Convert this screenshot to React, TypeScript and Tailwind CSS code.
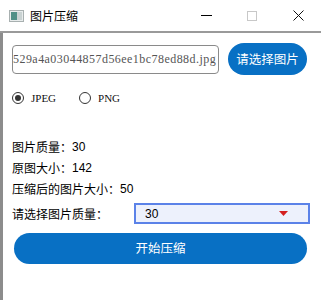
import React from 'react';

const cjk = "font-['Noto_Sans_CJK_SC',sans-serif]";

const Radio: React.FC<{ checked?: boolean; label: string }> = ({ checked, label }) => (
  <label className="flex items-center gap-[7px]">
    <span className="w-[12px] h-[12px] rounded-full border border-[#333] flex items-center justify-center bg-white">
      {checked && <span className="w-[6px] h-[6px] rounded-full bg-[#333]" />}
    </span>
    <span className="font-['Liberation_Serif',serif] text-[11px] leading-none text-[#111]">{label}</span>
  </label>
);

const InfoLine: React.FC<{ label: string; value: string }> = ({ label, value }) => (
  <div className="h-[21px] flex items-center">
    <span className={`${cjk} text-[12px] text-black`}>{label}</span>
    <span className="font-['Liberation_Sans',sans-serif] text-[12px] text-black">{value}</span>
  </div>
);

export default function App() {
  return (
    <div className="w-[321px] h-[300px] bg-white flex flex-col overflow-hidden">
      {/* title bar */}
      <div className="h-[31px] flex items-center shrink-0">
        <svg className="ml-[9px]" width="15" height="12" viewBox="0 0 15 12">
          <rect x="0.5" y="0.5" width="14" height="11" fill="#e8ecec" stroke="#a8b0b0" />
          <rect x="2" y="2" width="6" height="8" fill="#4f8f86" />
          <rect x="8" y="2" width="5" height="8" fill="#c9d2d2" />
        </svg>
        <span className={`${cjk} ml-[6px] text-[12px] text-black`}>图片压缩</span>
        <div className="ml-auto flex items-center h-full">
          <div className="w-[46px] flex justify-center">
            <div className="w-[11px] h-px bg-black" />
          </div>
          <div className="w-[46px] flex justify-center">
            <div className="w-[10px] h-[10px] border border-[#c8c8c8]" />
          </div>
          <div className="w-[46px] flex justify-center">
            <svg width="11" height="11" viewBox="0 0 11 11">
              <path d="M0.5 0.5 L10.5 10.5 M10.5 0.5 L0.5 10.5" stroke="#111" strokeWidth="1" />
            </svg>
          </div>
        </div>
      </div>
      <div className="h-[2px] bg-[#9a9a9a] shrink-0" />

      <div className="flex flex-1">
        <div className="w-[3px] bg-[#8c8c8c]" />
        <div className="flex-1 pl-[9px] pt-[10px] flex flex-col">
          <div className="flex items-center gap-[9px]">
            <div className="w-[207px] h-[29px] border border-[#8a8a8a] rounded-[4px] flex items-center overflow-hidden">
              <span className="font-['Liberation_Serif',serif] text-[12px] text-[#555] whitespace-nowrap tracking-[0.45px]">
                529a4a03044857d56ee1bc78ed88d.jpg
              </span>
            </div>
            <button className={`${cjk} w-[79px] h-[32px] rounded-full bg-[#0870c4] text-white text-[12.5px]`}>
              请选择图片
            </button>
          </div>

          <div className="mt-[17px] flex items-center gap-[23px] h-[12px]">
            <Radio checked label="JPEG" />
            <Radio label="PNG" />
          </div>

          <div className="mt-[32px] flex flex-col">
            <InfoLine label="图片质量：" value="30" />
            <InfoLine label="原图大小：" value="142" />
            <InfoLine label="压缩后的图片大小：" value="50" />
          </div>

          <div className="mt-[4px] h-[21px] flex items-center">
            <span className={`${cjk} w-[122px] text-[12px] text-black`}>请选择图片质量：</span>
            <div className="w-[176px] h-[21px] border-2 border-[#5b82e8] bg-[#edf1fc] flex items-center pl-[9px] pr-[20px]">
              <span className="font-['Liberation_Sans',sans-serif] text-[12px] text-black">30</span>
              <svg className="ml-auto" width="9" height="5" viewBox="0 0 9 5">
                <path d="M0 0 H9 L4.5 5 Z" fill="#d42020" />
              </svg>
            </div>
          </div>

          <button className={`${cjk} mt-[9px] ml-[2px] w-[293px] h-[31px] rounded-full bg-[#0870c4] text-white text-[12.5px]`}>
            开始压缩
          </button>
        </div>
      </div>
    </div>
  );
}
